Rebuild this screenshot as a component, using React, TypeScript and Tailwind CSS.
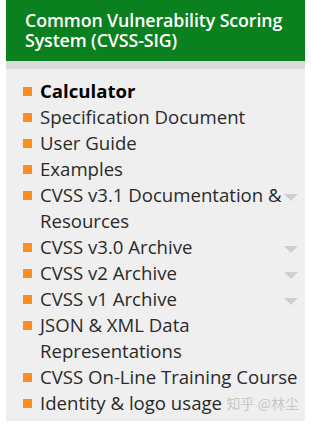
import React from "react";

type Item = { lines: string[]; bold?: boolean; arrow?: boolean };

const items: Item[] = [
  { lines: ["Calculator"], bold: true },
  { lines: ["Specification Document"] },
  { lines: ["User Guide"] },
  { lines: ["Examples"] },
  { lines: ["CVSS v3.1 Documentation &", "Resources"], arrow: true },
  { lines: ["CVSS v3.0 Archive"], arrow: true },
  { lines: ["CVSS v2 Archive"], arrow: true },
  { lines: ["CVSS v1 Archive"], arrow: true },
  { lines: ["JSON & XML Data", "Representations"] },
  { lines: ["CVSS On-Line Training Course"] },
  { lines: ["Identity & logo usage"] },
];

const Arrow = () => (
  <svg width="14" height="8" viewBox="0 0 14 8" className="absolute right-[7px] top-[12px]">
    <path d="M0 0 L14 0 L7 7 Z" fill="#cfcfcf" />
  </svg>
);

const App = () => {
  return (
    <div className="w-[311px] h-[424px] bg-white px-[6px] font-['Open_Sans',sans-serif]">
      <div className="bg-[#0b801e] h-[61px] pl-[19px] pt-[10px]">
        <h1 className="text-white font-semibold text-[17.8px] leading-[20px] tracking-[-0.1px]">
          Common Vulnerability Scoring
          <br />
          System (CVSS-SIG)
        </h1>
      </div>
      <div className="h-[8px] bg-[#d8dcd8]" />
      <div className="bg-[#efefef] h-[352px] pt-[9px] pl-[17px] relative">
        <ul>
          {items.map((it, i) => (
            <li key={i} className="relative flex items-start text-[18.6px] leading-[26px] text-[#2a2a2a]">
              <span className="w-[9px] h-[9px] bg-[#f7901e] mt-[9px] mr-[8px] shrink-0" />
              <span className={it.bold ? "font-bold text-black" : ""}>
                {it.lines.map((l, j) => (
                  <span key={j} className="block whitespace-nowrap">{l}</span>
                ))}
              </span>
              {it.arrow && <Arrow />}
            </li>
          ))}
        </ul>
        <span className="absolute right-[6px] bottom-[8px] text-[14px] leading-[20px] text-[#c8c8c8] font-['Noto_Sans_CJK_SC',sans-serif]">
          知乎 @林尘
        </span>
      </div>
    </div>
  );
};

export default App;
